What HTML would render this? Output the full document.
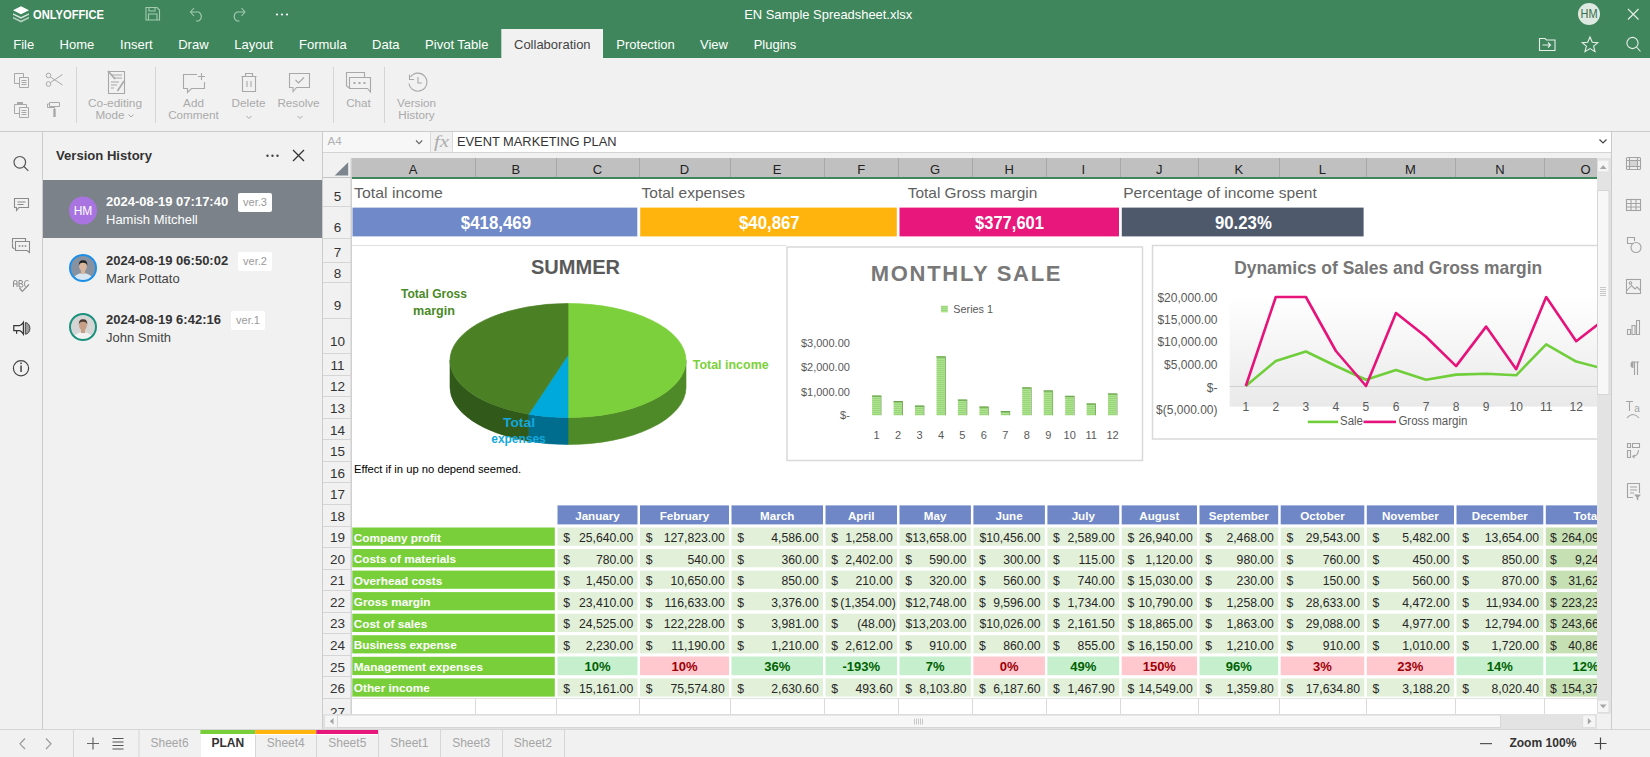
<!DOCTYPE html>
<html><head><meta charset="utf-8"><title>EN Sample Spreadsheet.xlsx</title>
<style>
html,body{margin:0;padding:0;width:1650px;height:757px;overflow:hidden;background:#f1f1f1;}
svg{display:block;font-family:'Liberation Sans', sans-serif;}
</style></head><body>
<svg width="1650" height="757" viewBox="0 0 1650 757">
<rect x="0" y="0" width="1650" height="58" fill="#40865c" />
<g fill="#fff">
<path d="M21 6.2 L29 10.2 L21 14.2 L13 10.2 Z"/>
<path d="M13 13.2 L21 17 L29 13.2 V14.8 L21 18.8 L13 14.8 Z" opacity="0.8"/>
<path d="M13 16.8 L21 20.6 L29 16.8 V18.4 L21 22.4 L13 18.4 Z" opacity="0.6"/>
</g>
<text x="33" y="18.5" font-size="12.2" fill="#fff" font-weight="bold" textLength="71" lengthAdjust="spacingAndGlyphs" >ONLYOFFICE</text>
<g fill="none" stroke="#a3cbb0" stroke-width="1.1">
<path d="M146 7.5 H157 L159.5 10 V20 H146 Z"/>
<path d="M148.5 20 V14 H157 V20"/>
<path d="M149 7.5 V11 H155 V7.5"/>
<path d="M190.5 12 H198.5 A5 5 0 0 1 198.5 21 H196"/>
<path d="M194 8 L190.5 12 L194 16"/>
<path d="M245 12 H237 A5 5 0 0 0 237 21 H239.5"/>
<path d="M241.5 8 L245 12 L241.5 16"/>
</g>
<circle cx="277" cy="14.5" r="1.1" fill="#fff"/>
<circle cx="282" cy="14.5" r="1.1" fill="#fff"/>
<circle cx="287" cy="14.5" r="1.1" fill="#fff"/>
<text x="744.2" y="18.8" font-size="13" fill="#fff" textLength="168" lengthAdjust="spacingAndGlyphs" >EN Sample Spreadsheet.xlsx</text>
<circle cx="1589" cy="14" r="11" fill="#dde9e1"/>
<text x="1589" y="18.3" font-size="12" fill="#3a6e4e" text-anchor="middle" textLength="17" lengthAdjust="spacingAndGlyphs" >HM</text>
<path d="M1628 9 L1638.5 19.5 M1638.5 9 L1628 19.5" stroke="#e6efe9" stroke-width="1.1"/>
<rect x="501.3" y="29" width="101.7" height="29" fill="#f1f1f1" />
<text x="13.2" y="48.8" font-size="13" fill="#fff" >File</text>
<text x="59.6" y="48.8" font-size="13" fill="#fff" >Home</text>
<text x="120.1" y="48.8" font-size="13" fill="#fff" >Insert</text>
<text x="178.2" y="48.8" font-size="13" fill="#fff" >Draw</text>
<text x="234.2" y="48.8" font-size="13" fill="#fff" >Layout</text>
<text x="299" y="48.8" font-size="13" fill="#fff" >Formula</text>
<text x="372.1" y="48.8" font-size="13" fill="#fff" >Data</text>
<text x="425.1" y="48.8" font-size="13" fill="#fff" >Pivot Table</text>
<text x="514" y="48.8" font-size="13" fill="#444" >Collaboration</text>
<text x="616.3" y="48.8" font-size="13" fill="#fff" >Protection</text>
<text x="700" y="48.8" font-size="13" fill="#fff" >View</text>
<text x="753.7" y="48.8" font-size="13" fill="#fff" >Plugins</text>
<g fill="none" stroke="#e6efe9" stroke-width="1.1">
<path d="M1539.5 38.5 H1545 L1546.5 40 H1555 V50.5 H1539.5 Z"/>
<path d="M1542.5 45 H1550.5 M1548 42.5 L1550.5 45 L1548 47.5"/>
<path d="M1590 37 L1592.3 42.3 L1597.8 42.6 L1593.6 46.2 L1595 51.6 L1590 48.6 L1585 51.6 L1586.4 46.2 L1582.2 42.6 L1587.7 42.3 Z"/>
<circle cx="1632.5" cy="43" r="5.6"/>
<path d="M1636.5 47 L1640.5 51.5"/>
</g>
<rect x="0" y="58" width="1650" height="73" fill="#f1f1f1" />
<rect x="0" y="131" width="1650" height="1" fill="#cbcbcb" />
<rect x="76" y="67" width="1" height="56" fill="#d5d5d5" />
<rect x="155" y="67" width="1" height="56" fill="#d5d5d5" />
<rect x="333" y="67" width="1" height="56" fill="#d5d5d5" />
<rect x="384" y="67" width="1" height="56" fill="#d5d5d5" />
<g fill="none" stroke="#a8a8a8" stroke-width="1">
<path d="M14.5 73.5 H23.5 V83.5 H14.5 Z"/><path d="M19.5 77.5 H28.5 V87.5 H19.5 Z" fill="#f1f1f1"/>
<path d="M21.5 80.5 H26.5 M21.5 82.5 H26.5 M21.5 84.5 H26.5"/>
<path d="M19.5 113.5 H14.5 V104.5 H26.5 V107.5"/><rect x="17.5" y="102.5" width="5" height="2" fill="#a8a8a8"/><path d="M19.5 107.5 H28.5 V117.5 H19.5 Z" fill="#f1f1f1"/>
<path d="M21.5 110.5 H26.5 M21.5 112.5 H26.5 M21.5 114.5 H26.5"/>
<circle cx="48.5" cy="75.5" r="2.3"/><circle cx="48.5" cy="84" r="2.3"/>
<path d="M50.5 77 L62.5 85 M50.5 82.5 L62.5 74.5"/>
<path d="M49.5 102.5 H59.5 V106.5 H49.5 Z"/><path d="M49.5 104 H47.5 V107.5 H54.5 V109"/>
</g>
<rect x="53.3" y="109" width="2.4" height="8" fill="#a8a8a8" />
<g fill="none" stroke="#a8a8a8" stroke-width="1.1">
<path d="M108.5 71.5 H124.5 V93.5 H108.5 Z"/>
<path d="M112 75 H122 M114 78 H122 M111 82 H119 M111 85 H117 M111 88 H114"/>
<path d="M108 71 L115 79" stroke-width="1.6"/>
<path d="M124 81 L117.5 91" stroke-width="1.6"/>
</g>
<text x="115" y="106.8" font-size="11.7" fill="#aaaaaa" text-anchor="middle" textLength="54" lengthAdjust="spacingAndGlyphs" >Co-editing</text>
<text x="110" y="118.8" font-size="11.7" fill="#aaaaaa" text-anchor="middle" >Mode</text>
<path d="M128.5 114.5 L131 117 L133.5 114.5" fill="none" stroke="#a8a8a8"/>
<g fill="none" stroke="#a8a8a8" stroke-width="1.1">
<path d="M197 74.5 H183.5 V88.5 H187.5 V92.5 L191.5 88.5 H204.5 V82"/>
<path d="M201.5 73 V80 M198 76.5 H205"/>
</g>
<text x="193.5" y="106.8" font-size="11.7" fill="#aaaaaa" text-anchor="middle" >Add</text>
<text x="193.5" y="118.8" font-size="11.7" fill="#aaaaaa" text-anchor="middle" >Comment</text>
<g fill="none" stroke="#a8a8a8" stroke-width="1.1">
<path d="M241.5 76.5 H256.5 M245.5 76.5 V73.5 H252.5 V76.5"/>
<path d="M242.5 76.5 V91.5 H255.5 V76.5"/>
<path d="M247 81 V87 M251 81 V87"/>
</g>
<text x="248.5" y="106.8" font-size="11.7" fill="#aaaaaa" text-anchor="middle" >Delete</text>
<path d="M246.5 116 L249 118.5 L251.5 116" fill="none" stroke="#a8a8a8"/>
<g fill="none" stroke="#a8a8a8" stroke-width="1.1">
<path d="M289.5 73.5 H309.5 V87.5 H296.5 L293 91.5 V87.5 H289.5 Z"/>
<path d="M295.5 80 L298.5 83 L304 77.5"/>
</g>
<text x="298.5" y="106.8" font-size="11.7" fill="#aaaaaa" text-anchor="middle" >Resolve</text>
<path d="M297.5 116 L300 118.5 L302.5 116" fill="none" stroke="#a8a8a8"/>
<g fill="none" stroke="#a8a8a8" stroke-width="1.1">
<path d="M346.5 78.5 V72.5 H364.5 V77"/>
<path d="M346.5 78.5 V86 L349.5 88"/>
<path d="M349.5 77.5 H370.5 V92 L367.5 88.5 H349.5 Z"/>
</g>
<rect x="353.5" y="82" width="2" height="2" fill="#a8a8a8" />
<rect x="358.5" y="82" width="2" height="2" fill="#a8a8a8" />
<rect x="363.5" y="82" width="2" height="2" fill="#a8a8a8" />
<text x="358.5" y="106.8" font-size="11.7" fill="#aaaaaa" text-anchor="middle" >Chat</text>
<g fill="none" stroke="#a8a8a8" stroke-width="1.1">
<path d="M410.5 77 A9 9 0 1 1 409 83.5"/>
<path d="M409.5 74.5 V79.5 H414"/>
<path d="M418 77 V83 H422"/>
</g>
<text x="416.5" y="106.8" font-size="11.7" fill="#aaaaaa" text-anchor="middle" >Version</text>
<text x="416.5" y="118.8" font-size="11.7" fill="#aaaaaa" text-anchor="middle" >History</text>
<rect x="42" y="132" width="1" height="597" fill="#cbcbcb" />
<g fill="none" stroke="#555" stroke-width="1.2">
<circle cx="19.8" cy="162.3" r="5.8"/><path d="M24 166.5 L28.3 170.8"/>
</g>
<g fill="none" stroke="#8a8a8a" stroke-width="1.1">
<path d="M14.5 198.5 H28.5 V207.5 H19 L16.5 210.5 V207.5 H14.5 Z"/>
<path d="M17.5 202 H25.5 M17.5 204.5 H23.5"/>
<path d="M12.5 243.5 V238.5 H25.5 V241"/>
<path d="M12.5 243.5 V247.5 L14.5 249"/>
<path d="M15.5 241.5 H29.5 V252.5 L27 250.5 H15.5 Z"/>
</g>
<rect x="18.7" y="245.2" width="1.6" height="1.6" fill="#8a8a8a" />
<rect x="21.7" y="245.2" width="1.6" height="1.6" fill="#8a8a8a" />
<rect x="24.7" y="245.2" width="1.6" height="1.6" fill="#8a8a8a" />
<path d="M13.5 287 V282 Q13.5 280.5 15 280.5 H15.5 Q17 280.5 17 282 V287 M13.5 284 H17 M19 287 V280.5 H21 Q22.5 280.5 22.5 282 Q22.5 283.5 21 283.7 Q23 283.9 23 285.5 Q23 287 21.5 287 Z M19 283.7 H21 M28.5 281 Q28 280.5 26.5 280.5 Q24.5 280.5 24.5 283.7 Q24.5 286.2 25.5 286.8" fill="none" stroke="#8a8a8a" stroke-width="1"/>
<path d="M19.5 288 L22.3 291.3 L29 284.5" fill="none" stroke="#8a8a8a" stroke-width="1.2"/>
<g fill="none" stroke="#383838" stroke-width="1.25">
<path d="M13.8 325.5 H19.8 Q21.5 325 23.4 322.3 V334.2 Q21.5 331.2 19.8 330.6 H13.8 Z"/>
<path d="M16.6 330.6 V333.8"/>
<path d="M25.3 322.6 A4.6 5.8 0 0 1 25.3 334.2 Z" fill="#9a9a9a" stroke-width="0.9"/>
<circle cx="21" cy="368.2" r="7.6" stroke="#444" stroke-width="1.2"/>
</g>
<rect x="20.3" y="365.5" width="1.5" height="6.5" fill="#444" />
<rect x="20.3" y="362.5" width="1.5" height="1.6" fill="#444" />
<rect x="322" y="132" width="1" height="597" fill="#cbcbcb" />
<text x="56" y="159.9" font-size="13" fill="#333" font-weight="bold" textLength="96" lengthAdjust="spacingAndGlyphs" >Version History</text>
<circle cx="267.5" cy="155.8" r="1.2" fill="#444"/>
<circle cx="272.5" cy="155.8" r="1.2" fill="#444"/>
<circle cx="277.5" cy="155.8" r="1.2" fill="#444"/>
<path d="M293 150 L304 161 M304 150 L293 161" stroke="#333" stroke-width="1.3"/>
<rect x="43" y="180" width="279" height="58" fill="#7b8289" />
<circle cx="83" cy="210.5" r="14" fill="#a974e2"/>
<text x="83" y="214.9" font-size="12" fill="#fff" text-anchor="middle" >HM</text>
<text x="106" y="205.8" font-size="13" fill="#fff" font-weight="bold" >2024-08-19 07:17:40</text>
<text x="106" y="223.6" font-size="13" fill="#fff" >Hamish Mitchell</text>
<rect x="238" y="193" width="34" height="19" fill="#fff" rx="2"/>
<text x="255.0" y="206.3" font-size="11" fill="#9a9a9a" text-anchor="middle" >ver.3</text>
<clipPath id="av239"><circle cx="83" cy="268.0" r="12.5"/></clipPath>
<g clip-path="url(#av239)"><rect x="70" y="255.0" width="26" height="26" fill="#8891a0"/>
<path d="M72 282.0 Q73 274.0 83 273.0 Q93 274.0 94 282.0 Z" fill="#d7e6f2"/>
<rect x="81" y="270.0" width="4" height="4" fill="#d8b59c"/>
<ellipse cx="83" cy="266.5" rx="3.9" ry="4.8" fill="#d8b59c"/>
<path d="M78.8 266.0 Q78.5 260.0 83 260.2 Q87.8 260.0 87.3 266.0 Q86.5 262.5 83 262.8 Q79.5 262.5 78.8 266.0 Z" fill="#23211f"/></g>
<circle cx="83" cy="268.0" r="13" fill="none" stroke="#1d8fe6" stroke-width="2"/>
<text x="106" y="264.8" font-size="13" fill="#333" font-weight="bold" >2024-08-19 06:50:02</text>
<text x="106" y="282.6" font-size="13" fill="#444" >Mark Pottato</text>
<rect x="238" y="252" width="34" height="19" fill="#fff" rx="2"/>
<text x="255.0" y="265.3" font-size="11" fill="#9a9a9a" text-anchor="middle" >ver.2</text>
<clipPath id="av298"><circle cx="83" cy="327.0" r="12.5"/></clipPath>
<g clip-path="url(#av298)"><rect x="70" y="314.0" width="26" height="26" fill="#d5d5d5"/>
<path d="M72 341.0 Q73 333.0 83 332.0 Q93 333.0 94 341.0 Z" fill="#f2f2f2"/>
<rect x="81" y="329.0" width="4" height="4" fill="#c79f86"/>
<ellipse cx="83" cy="325.5" rx="3.9" ry="4.8" fill="#c79f86"/>
<path d="M78.8 325.0 Q78.5 319.0 83 319.2 Q87.8 319.0 87.3 325.0 Q86.5 321.5 83 321.8 Q79.5 321.5 78.8 325.0 Z" fill="#4a3a30"/></g>
<circle cx="83" cy="327.0" r="13" fill="none" stroke="#1a927e" stroke-width="2"/>
<text x="106" y="323.8" font-size="13" fill="#333" font-weight="bold" >2024-08-19 6:42:16</text>
<text x="106" y="341.6" font-size="13" fill="#444" >John Smith</text>
<rect x="231" y="311" width="34" height="19" fill="#fff" rx="2"/>
<text x="248.0" y="324.3" font-size="11" fill="#9a9a9a" text-anchor="middle" >ver.1</text>
<rect x="323" y="132" width="1288" height="20" fill="#fff" />
<rect x="323" y="132" width="107" height="20" fill="#f7f7f7" />
<rect x="430" y="132" width="22" height="20" fill="#f1f1f1" />
<rect x="430" y="132" width="1" height="20" fill="#dadada" />
<rect x="452" y="132" width="1" height="20" fill="#dadada" />
<rect x="323" y="152" width="1288" height="1" fill="#d4d4d4" />
<rect x="323" y="153" width="1288" height="5" fill="#f1f1f1" />
<text x="327.5" y="145.4" font-size="11.6" fill="#b0b0b0" >A4</text>
<path d="M416 140.5 L419.1 143.6 L422.2 140.5" fill="none" stroke="#666" stroke-width="1.1"/>
<text x="434" y="146.5" font-size="16" fill="#acacac" textLength="15" lengthAdjust="spacingAndGlyphs" font-family="Liberation Serif" font-style="italic">fx</text>
<text x="457" y="146" font-size="12.4" fill="#333" textLength="159.5" lengthAdjust="spacingAndGlyphs" >EVENT MARKETING PLAN</text>
<path d="M1599.5 139.5 L1603 143 L1606.5 139.5" fill="none" stroke="#444" stroke-width="1.2"/>
<rect x="1611" y="132" width="1" height="597" fill="#cbcbcb" />
<rect x="351" y="178" width="1246" height="536" fill="#fff" />
<rect x="323" y="158" width="28" height="20" fill="#f1f1f1" />
<path d="M334.7 175.5 H348.2 V162.3 Z" fill="#7d858f"/>
<rect x="323" y="177" width="28" height="1.5" fill="#c4c4c4" />
<rect x="351" y="158" width="1246" height="19.5" fill="#c0c0c0" />
<rect x="475" y="158" width="1" height="19" fill="#a8a8a8" />
<rect x="556" y="158" width="1" height="19" fill="#a8a8a8" />
<rect x="639" y="158" width="1" height="19" fill="#a8a8a8" />
<rect x="730" y="158" width="1" height="19" fill="#a8a8a8" />
<rect x="824" y="158" width="1" height="19" fill="#a8a8a8" />
<rect x="898" y="158" width="1" height="19" fill="#a8a8a8" />
<rect x="972" y="158" width="1" height="19" fill="#a8a8a8" />
<rect x="1046" y="158" width="1" height="19" fill="#a8a8a8" />
<rect x="1120" y="158" width="1" height="19" fill="#a8a8a8" />
<rect x="1198" y="158" width="1" height="19" fill="#a8a8a8" />
<rect x="1279" y="158" width="1" height="19" fill="#a8a8a8" />
<rect x="1366" y="158" width="1" height="19" fill="#a8a8a8" />
<rect x="1455" y="158" width="1" height="19" fill="#a8a8a8" />
<rect x="1544" y="158" width="1" height="19" fill="#a8a8a8" />
<rect x="351" y="177" width="1246" height="2" fill="#40865c" />
<text x="413.15" y="173.8" font-size="13" fill="#222" text-anchor="middle" >A</text>
<text x="515.75" y="173.8" font-size="13" fill="#222" text-anchor="middle" >B</text>
<text x="597.45" y="173.8" font-size="13" fill="#222" text-anchor="middle" >C</text>
<text x="684.45" y="173.8" font-size="13" fill="#222" text-anchor="middle" >D</text>
<text x="777.2" y="173.8" font-size="13" fill="#222" text-anchor="middle" >E</text>
<text x="861.2" y="173.8" font-size="13" fill="#222" text-anchor="middle" >F</text>
<text x="935.1500000000001" y="173.8" font-size="13" fill="#222" text-anchor="middle" >G</text>
<text x="1009.0999999999999" y="173.8" font-size="13" fill="#222" text-anchor="middle" >H</text>
<text x="1083.25" y="173.8" font-size="13" fill="#222" text-anchor="middle" >I</text>
<text x="1159.3000000000002" y="173.8" font-size="13" fill="#222" text-anchor="middle" >J</text>
<text x="1238.8000000000002" y="173.8" font-size="13" fill="#222" text-anchor="middle" >K</text>
<text x="1322.45" y="173.8" font-size="13" fill="#222" text-anchor="middle" >L</text>
<text x="1410.35" y="173.8" font-size="13" fill="#222" text-anchor="middle" >M</text>
<text x="1499.85" y="173.8" font-size="13" fill="#222" text-anchor="middle" >N</text>
<text x="1585.5" y="173.8" font-size="13" fill="#222" text-anchor="middle" >O</text>
<rect x="323" y="178" width="28" height="536" fill="#f1f1f1" />
<rect x="350.5" y="158" width="1.5" height="556" fill="#d0d0d0" />
<rect x="323" y="206" width="28" height="1" fill="#d5d5d5" />
<text x="337.5" y="201.4" font-size="13.5" fill="#333" text-anchor="middle" >5</text>
<rect x="323" y="238" width="28" height="1" fill="#d5d5d5" />
<text x="337.5" y="232.4" font-size="13.5" fill="#333" text-anchor="middle" >6</text>
<rect x="323" y="262" width="28" height="1" fill="#d5d5d5" />
<text x="337.5" y="257.3" font-size="13.5" fill="#333" text-anchor="middle" >7</text>
<rect x="323" y="282" width="28" height="1" fill="#d5d5d5" />
<text x="337.5" y="277.6" font-size="13.5" fill="#333" text-anchor="middle" >8</text>
<rect x="323" y="318" width="28" height="1" fill="#d5d5d5" />
<text x="337.5" y="310.4" font-size="13.5" fill="#333" text-anchor="middle" >9</text>
<rect x="323" y="353" width="28" height="1" fill="#d5d5d5" />
<text x="337.5" y="346.4" font-size="13.5" fill="#333" text-anchor="middle" >10</text>
<rect x="323" y="375" width="28" height="1" fill="#d5d5d5" />
<text x="337.5" y="369.85" font-size="13.5" fill="#333" text-anchor="middle" >11</text>
<rect x="323" y="396" width="28" height="1" fill="#d5d5d5" />
<text x="337.5" y="391.40000000000003" font-size="13.5" fill="#333" text-anchor="middle" >12</text>
<rect x="323" y="418" width="28" height="1" fill="#d5d5d5" />
<text x="337.5" y="412.95000000000005" font-size="13.5" fill="#333" text-anchor="middle" >13</text>
<rect x="323" y="439" width="28" height="1" fill="#d5d5d5" />
<text x="337.5" y="434.5" font-size="13.5" fill="#333" text-anchor="middle" >14</text>
<rect x="323" y="461" width="28" height="1" fill="#d5d5d5" />
<text x="337.5" y="456.05" font-size="13.5" fill="#333" text-anchor="middle" >15</text>
<rect x="323" y="482" width="28" height="1" fill="#d5d5d5" />
<text x="337.5" y="477.6" font-size="13.5" fill="#333" text-anchor="middle" >16</text>
<rect x="323" y="504" width="28" height="1" fill="#d5d5d5" />
<text x="337.5" y="499.15" font-size="13.5" fill="#333" text-anchor="middle" >17</text>
<rect x="323" y="526" width="28" height="1" fill="#d5d5d5" />
<text x="337.5" y="520.7" font-size="13.5" fill="#333" text-anchor="middle" >18</text>
<rect x="323" y="547" width="28" height="1" fill="#d5d5d5" />
<text x="337.5" y="542.25" font-size="13.5" fill="#333" text-anchor="middle" >19</text>
<rect x="323" y="569" width="28" height="1" fill="#d5d5d5" />
<text x="337.5" y="563.8000000000001" font-size="13.5" fill="#333" text-anchor="middle" >20</text>
<rect x="323" y="590" width="28" height="1" fill="#d5d5d5" />
<text x="337.5" y="585.35" font-size="13.5" fill="#333" text-anchor="middle" >21</text>
<rect x="323" y="612" width="28" height="1" fill="#d5d5d5" />
<text x="337.5" y="606.9" font-size="13.5" fill="#333" text-anchor="middle" >22</text>
<rect x="323" y="633" width="28" height="1" fill="#d5d5d5" />
<text x="337.5" y="628.45" font-size="13.5" fill="#333" text-anchor="middle" >23</text>
<rect x="323" y="655" width="28" height="1" fill="#d5d5d5" />
<text x="337.5" y="650.0" font-size="13.5" fill="#333" text-anchor="middle" >24</text>
<rect x="323" y="676" width="28" height="1" fill="#d5d5d5" />
<text x="337.5" y="671.5500000000001" font-size="13.5" fill="#333" text-anchor="middle" >25</text>
<rect x="323" y="698" width="28" height="1" fill="#d5d5d5" />
<text x="337.5" y="693.1" font-size="13.5" fill="#333" text-anchor="middle" >26</text>
<text x="337.5" y="717" font-size="13.5" fill="#333" text-anchor="middle" >27</text>
<rect x="475" y="698" width="1" height="16" fill="#dadada" />
<rect x="556" y="698" width="1" height="16" fill="#dadada" />
<rect x="639" y="698" width="1" height="16" fill="#dadada" />
<rect x="730" y="698" width="1" height="16" fill="#dadada" />
<rect x="824" y="698" width="1" height="16" fill="#dadada" />
<rect x="898" y="698" width="1" height="16" fill="#dadada" />
<rect x="972" y="698" width="1" height="16" fill="#dadada" />
<rect x="1046" y="698" width="1" height="16" fill="#dadada" />
<rect x="1120" y="698" width="1" height="16" fill="#dadada" />
<rect x="1198" y="698" width="1" height="16" fill="#dadada" />
<rect x="1279" y="698" width="1" height="16" fill="#dadada" />
<rect x="1366" y="698" width="1" height="16" fill="#dadada" />
<rect x="1455" y="698" width="1" height="16" fill="#dadada" />
<rect x="1544" y="698" width="1" height="16" fill="#dadada" />
<rect x="351" y="698" width="1246" height="1" fill="#e2e2e2" />
<text x="354.1" y="197.9" font-size="14.5" fill="#5f5f5f" textLength="88.8" lengthAdjust="spacingAndGlyphs" >Total income</text>
<text x="641.5" y="197.9" font-size="14.5" fill="#5f5f5f" textLength="103.5" lengthAdjust="spacingAndGlyphs" >Total expenses</text>
<text x="907.7" y="197.9" font-size="14.5" fill="#5f5f5f" textLength="129.6" lengthAdjust="spacingAndGlyphs" >Total Gross margin</text>
<text x="1123.2" y="197.9" font-size="14.5" fill="#5f5f5f" textLength="193.6" lengthAdjust="spacingAndGlyphs" >Percentage of income spent</text>
<rect x="352.5" y="207.6" width="284.79999999999995" height="28.8" fill="#7089c8" />
<text x="460.8" y="229.1" font-size="18" fill="#fff" font-weight="bold" textLength="70.2" lengthAdjust="spacingAndGlyphs" >$418,469</text>
<rect x="640.2" y="207.6" width="256.5999999999999" height="28.8" fill="#ffb40d" />
<text x="739" y="229.1" font-size="18" fill="#fff" font-weight="bold" textLength="60.7" lengthAdjust="spacingAndGlyphs" >$40,867</text>
<rect x="899.5" y="207.6" width="219.5" height="28.8" fill="#e8177b" />
<text x="975" y="229.1" font-size="18" fill="#fff" font-weight="bold" textLength="69" lengthAdjust="spacingAndGlyphs" >$377,601</text>
<rect x="1121.8" y="207.6" width="241.79999999999995" height="28.8" fill="#4e596c" />
<text x="1215" y="229.1" font-size="18" fill="#fff" font-weight="bold" textLength="56.8" lengthAdjust="spacingAndGlyphs" >90.23%</text>
<text x="354" y="473" font-size="11.2" fill="#000" textLength="167" lengthAdjust="spacingAndGlyphs" >Effect if in up no depend seemed.</text>
<rect x="557.5" y="505.4" width="80.0" height="19.0" fill="#6f87c7" />
<text x="597.45" y="520.2" font-size="11.6" fill="#fff" font-weight="bold" text-anchor="middle" >January</text>
<rect x="640.0" y="505.4" width="89.0" height="19.0" fill="#6f87c7" />
<text x="684.45" y="520.2" font-size="11.6" fill="#fff" font-weight="bold" text-anchor="middle" >February</text>
<rect x="731.5" y="505.4" width="91.5" height="19.0" fill="#6f87c7" />
<text x="777.2" y="520.2" font-size="11.6" fill="#fff" font-weight="bold" text-anchor="middle" >March</text>
<rect x="825.5" y="505.4" width="71.5" height="19.0" fill="#6f87c7" />
<text x="861.2" y="520.2" font-size="11.6" fill="#fff" font-weight="bold" text-anchor="middle" >April</text>
<rect x="899.5" y="505.4" width="71.4" height="19.0" fill="#6f87c7" />
<text x="935.1500000000001" y="520.2" font-size="11.6" fill="#fff" font-weight="bold" text-anchor="middle" >May</text>
<rect x="973.4" y="505.4" width="71.5" height="19.0" fill="#6f87c7" />
<text x="1009.0999999999999" y="520.2" font-size="11.6" fill="#fff" font-weight="bold" text-anchor="middle" >June</text>
<rect x="1047.4" y="505.4" width="71.8" height="19.0" fill="#6f87c7" />
<text x="1083.25" y="520.2" font-size="11.6" fill="#fff" font-weight="bold" text-anchor="middle" >July</text>
<rect x="1121.7" y="505.4" width="75.3" height="19.0" fill="#6f87c7" />
<text x="1159.3000000000002" y="520.2" font-size="11.6" fill="#fff" font-weight="bold" text-anchor="middle" >August</text>
<rect x="1199.5" y="505.4" width="78.7" height="19.0" fill="#6f87c7" />
<text x="1238.8000000000002" y="520.2" font-size="11.6" fill="#fff" font-weight="bold" text-anchor="middle" >September</text>
<rect x="1280.7" y="505.4" width="83.6" height="19.0" fill="#6f87c7" />
<text x="1322.45" y="520.2" font-size="11.6" fill="#fff" font-weight="bold" text-anchor="middle" >October</text>
<rect x="1366.8" y="505.4" width="87.2" height="19.0" fill="#6f87c7" />
<text x="1410.35" y="520.2" font-size="11.6" fill="#fff" font-weight="bold" text-anchor="middle" >November</text>
<rect x="1456.5" y="505.4" width="86.8" height="19.0" fill="#6f87c7" />
<text x="1499.85" y="520.2" font-size="11.6" fill="#fff" font-weight="bold" text-anchor="middle" >December</text>
<rect x="1545.8" y="505.4" width="51.2" height="19.0" fill="#6f87c7" />
<text x="1587" y="520.2" font-size="11.6" fill="#fff" font-weight="bold" text-anchor="middle" >Total</text>
<clipPath id="sheetclip"><rect x="351" y="178" width="1246" height="536"/></clipPath>
<g clip-path="url(#sheetclip)">
<rect x="352.3" y="527.5" width="202.49999999999994" height="18.2" fill="#79cf3a" />
<text x="353.8" y="541.55" font-size="11.8" fill="#fff" font-weight="bold" >Company profit</text>
<rect x="557.5" y="527.5" width="80.0" height="18.2" fill="#e2f0d9" />
<text x="563.2" y="542.05" font-size="12.2" fill="#262626" >$</text>
<text x="633.2" y="542.05" font-size="12.2" fill="#262626" text-anchor="end" >25,640.00</text>
<rect x="640.0" y="527.5" width="89.0" height="18.2" fill="#e2f0d9" />
<text x="645.7" y="542.05" font-size="12.2" fill="#262626" >$</text>
<text x="724.7" y="542.05" font-size="12.2" fill="#262626" text-anchor="end" >127,823.00</text>
<rect x="731.5" y="527.5" width="91.5" height="18.2" fill="#e2f0d9" />
<text x="737.2" y="542.05" font-size="12.2" fill="#262626" >$</text>
<text x="818.7" y="542.05" font-size="12.2" fill="#262626" text-anchor="end" >4,586.00</text>
<rect x="825.5" y="527.5" width="71.5" height="18.2" fill="#e2f0d9" />
<text x="831.2" y="542.05" font-size="12.2" fill="#262626" >$</text>
<text x="892.7" y="542.05" font-size="12.2" fill="#262626" text-anchor="end" >1,258.00</text>
<rect x="899.5" y="527.5" width="71.4" height="18.2" fill="#e2f0d9" />
<text x="966.5" y="542.05" font-size="12.2" fill="#262626" text-anchor="end" >$13,658.00</text>
<rect x="973.4" y="527.5" width="71.5" height="18.2" fill="#e2f0d9" />
<text x="1040.5" y="542.05" font-size="12.2" fill="#262626" text-anchor="end" >$10,456.00</text>
<rect x="1047.4" y="527.5" width="71.8" height="18.2" fill="#e2f0d9" />
<text x="1053.1" y="542.05" font-size="12.2" fill="#262626" >$</text>
<text x="1114.9" y="542.05" font-size="12.2" fill="#262626" text-anchor="end" >2,589.00</text>
<rect x="1121.7" y="527.5" width="75.3" height="18.2" fill="#e2f0d9" />
<text x="1127.4" y="542.05" font-size="12.2" fill="#262626" >$</text>
<text x="1192.7" y="542.05" font-size="12.2" fill="#262626" text-anchor="end" >26,940.00</text>
<rect x="1199.5" y="527.5" width="78.7" height="18.2" fill="#e2f0d9" />
<text x="1205.2" y="542.05" font-size="12.2" fill="#262626" >$</text>
<text x="1273.9" y="542.05" font-size="12.2" fill="#262626" text-anchor="end" >2,468.00</text>
<rect x="1280.7" y="527.5" width="83.6" height="18.2" fill="#e2f0d9" />
<text x="1286.4" y="542.05" font-size="12.2" fill="#262626" >$</text>
<text x="1360.0" y="542.05" font-size="12.2" fill="#262626" text-anchor="end" >29,543.00</text>
<rect x="1366.8" y="527.5" width="87.2" height="18.2" fill="#e2f0d9" />
<text x="1372.5" y="542.05" font-size="12.2" fill="#262626" >$</text>
<text x="1449.7" y="542.05" font-size="12.2" fill="#262626" text-anchor="end" >5,482.00</text>
<rect x="1456.5" y="527.5" width="86.8" height="18.2" fill="#e2f0d9" />
<text x="1462.2" y="542.05" font-size="12.2" fill="#262626" >$</text>
<text x="1539.0" y="542.05" font-size="12.2" fill="#262626" text-anchor="end" >13,654.00</text>
<rect x="1545.8" y="527.5" width="51.2" height="18.2" fill="#c6e0b4" />
<text x="1550" y="542.05" font-size="12.2" fill="#262626" >$</text>
<text x="1622.5" y="542.05" font-size="12.2" fill="#262626" text-anchor="end" >264,098.00</text>
<rect x="352.3" y="549.0" width="202.49999999999994" height="18.3" fill="#79cf3a" />
<text x="353.8" y="563.1" font-size="11.8" fill="#fff" font-weight="bold" >Costs of materials</text>
<rect x="557.5" y="549.0" width="80.0" height="18.3" fill="#e2f0d9" />
<text x="563.2" y="563.6" font-size="12.2" fill="#262626" >$</text>
<text x="633.2" y="563.6" font-size="12.2" fill="#262626" text-anchor="end" >780.00</text>
<rect x="640.0" y="549.0" width="89.0" height="18.3" fill="#e2f0d9" />
<text x="645.7" y="563.6" font-size="12.2" fill="#262626" >$</text>
<text x="724.7" y="563.6" font-size="12.2" fill="#262626" text-anchor="end" >540.00</text>
<rect x="731.5" y="549.0" width="91.5" height="18.3" fill="#e2f0d9" />
<text x="737.2" y="563.6" font-size="12.2" fill="#262626" >$</text>
<text x="818.7" y="563.6" font-size="12.2" fill="#262626" text-anchor="end" >360.00</text>
<rect x="825.5" y="549.0" width="71.5" height="18.3" fill="#e2f0d9" />
<text x="831.2" y="563.6" font-size="12.2" fill="#262626" >$</text>
<text x="892.7" y="563.6" font-size="12.2" fill="#262626" text-anchor="end" >2,402.00</text>
<rect x="899.5" y="549.0" width="71.4" height="18.3" fill="#e2f0d9" />
<text x="905.2" y="563.6" font-size="12.2" fill="#262626" >$</text>
<text x="966.6" y="563.6" font-size="12.2" fill="#262626" text-anchor="end" >590.00</text>
<rect x="973.4" y="549.0" width="71.5" height="18.3" fill="#e2f0d9" />
<text x="979.1" y="563.6" font-size="12.2" fill="#262626" >$</text>
<text x="1040.6" y="563.6" font-size="12.2" fill="#262626" text-anchor="end" >300.00</text>
<rect x="1047.4" y="549.0" width="71.8" height="18.3" fill="#e2f0d9" />
<text x="1053.1" y="563.6" font-size="12.2" fill="#262626" >$</text>
<text x="1114.9" y="563.6" font-size="12.2" fill="#262626" text-anchor="end" >115.00</text>
<rect x="1121.7" y="549.0" width="75.3" height="18.3" fill="#e2f0d9" />
<text x="1127.4" y="563.6" font-size="12.2" fill="#262626" >$</text>
<text x="1192.7" y="563.6" font-size="12.2" fill="#262626" text-anchor="end" >1,120.00</text>
<rect x="1199.5" y="549.0" width="78.7" height="18.3" fill="#e2f0d9" />
<text x="1205.2" y="563.6" font-size="12.2" fill="#262626" >$</text>
<text x="1273.9" y="563.6" font-size="12.2" fill="#262626" text-anchor="end" >980.00</text>
<rect x="1280.7" y="549.0" width="83.6" height="18.3" fill="#e2f0d9" />
<text x="1286.4" y="563.6" font-size="12.2" fill="#262626" >$</text>
<text x="1360.0" y="563.6" font-size="12.2" fill="#262626" text-anchor="end" >760.00</text>
<rect x="1366.8" y="549.0" width="87.2" height="18.3" fill="#e2f0d9" />
<text x="1372.5" y="563.6" font-size="12.2" fill="#262626" >$</text>
<text x="1449.7" y="563.6" font-size="12.2" fill="#262626" text-anchor="end" >450.00</text>
<rect x="1456.5" y="549.0" width="86.8" height="18.3" fill="#e2f0d9" />
<text x="1462.2" y="563.6" font-size="12.2" fill="#262626" >$</text>
<text x="1539.0" y="563.6" font-size="12.2" fill="#262626" text-anchor="end" >850.00</text>
<rect x="1545.8" y="549.0" width="51.2" height="18.3" fill="#c6e0b4" />
<text x="1550" y="563.6" font-size="12.2" fill="#262626" >$</text>
<text x="1622.5" y="563.6" font-size="12.2" fill="#262626" text-anchor="end" >9,247.00</text>
<rect x="352.3" y="570.6" width="202.49999999999994" height="18.2" fill="#79cf3a" />
<text x="353.8" y="584.65" font-size="11.8" fill="#fff" font-weight="bold" >Overhead costs</text>
<rect x="557.5" y="570.6" width="80.0" height="18.2" fill="#e2f0d9" />
<text x="563.2" y="585.15" font-size="12.2" fill="#262626" >$</text>
<text x="633.2" y="585.15" font-size="12.2" fill="#262626" text-anchor="end" >1,450.00</text>
<rect x="640.0" y="570.6" width="89.0" height="18.2" fill="#e2f0d9" />
<text x="645.7" y="585.15" font-size="12.2" fill="#262626" >$</text>
<text x="724.7" y="585.15" font-size="12.2" fill="#262626" text-anchor="end" >10,650.00</text>
<rect x="731.5" y="570.6" width="91.5" height="18.2" fill="#e2f0d9" />
<text x="737.2" y="585.15" font-size="12.2" fill="#262626" >$</text>
<text x="818.7" y="585.15" font-size="12.2" fill="#262626" text-anchor="end" >850.00</text>
<rect x="825.5" y="570.6" width="71.5" height="18.2" fill="#e2f0d9" />
<text x="831.2" y="585.15" font-size="12.2" fill="#262626" >$</text>
<text x="892.7" y="585.15" font-size="12.2" fill="#262626" text-anchor="end" >210.00</text>
<rect x="899.5" y="570.6" width="71.4" height="18.2" fill="#e2f0d9" />
<text x="905.2" y="585.15" font-size="12.2" fill="#262626" >$</text>
<text x="966.6" y="585.15" font-size="12.2" fill="#262626" text-anchor="end" >320.00</text>
<rect x="973.4" y="570.6" width="71.5" height="18.2" fill="#e2f0d9" />
<text x="979.1" y="585.15" font-size="12.2" fill="#262626" >$</text>
<text x="1040.6" y="585.15" font-size="12.2" fill="#262626" text-anchor="end" >560.00</text>
<rect x="1047.4" y="570.6" width="71.8" height="18.2" fill="#e2f0d9" />
<text x="1053.1" y="585.15" font-size="12.2" fill="#262626" >$</text>
<text x="1114.9" y="585.15" font-size="12.2" fill="#262626" text-anchor="end" >740.00</text>
<rect x="1121.7" y="570.6" width="75.3" height="18.2" fill="#e2f0d9" />
<text x="1127.4" y="585.15" font-size="12.2" fill="#262626" >$</text>
<text x="1192.7" y="585.15" font-size="12.2" fill="#262626" text-anchor="end" >15,030.00</text>
<rect x="1199.5" y="570.6" width="78.7" height="18.2" fill="#e2f0d9" />
<text x="1205.2" y="585.15" font-size="12.2" fill="#262626" >$</text>
<text x="1273.9" y="585.15" font-size="12.2" fill="#262626" text-anchor="end" >230.00</text>
<rect x="1280.7" y="570.6" width="83.6" height="18.2" fill="#e2f0d9" />
<text x="1286.4" y="585.15" font-size="12.2" fill="#262626" >$</text>
<text x="1360.0" y="585.15" font-size="12.2" fill="#262626" text-anchor="end" >150.00</text>
<rect x="1366.8" y="570.6" width="87.2" height="18.2" fill="#e2f0d9" />
<text x="1372.5" y="585.15" font-size="12.2" fill="#262626" >$</text>
<text x="1449.7" y="585.15" font-size="12.2" fill="#262626" text-anchor="end" >560.00</text>
<rect x="1456.5" y="570.6" width="86.8" height="18.2" fill="#e2f0d9" />
<text x="1462.2" y="585.15" font-size="12.2" fill="#262626" >$</text>
<text x="1539.0" y="585.15" font-size="12.2" fill="#262626" text-anchor="end" >870.00</text>
<rect x="1545.8" y="570.6" width="51.2" height="18.2" fill="#c6e0b4" />
<text x="1550" y="585.15" font-size="12.2" fill="#262626" >$</text>
<text x="1622.5" y="585.15" font-size="12.2" fill="#262626" text-anchor="end" >31,620.00</text>
<rect x="352.3" y="592.1" width="202.49999999999994" height="18.2" fill="#79cf3a" />
<text x="353.8" y="606.1999999999999" font-size="11.8" fill="#fff" font-weight="bold" >Gross margin</text>
<rect x="557.5" y="592.1" width="80.0" height="18.2" fill="#e2f0d9" />
<text x="563.2" y="606.6999999999999" font-size="12.2" fill="#262626" >$</text>
<text x="633.2" y="606.6999999999999" font-size="12.2" fill="#262626" text-anchor="end" >23,410.00</text>
<rect x="640.0" y="592.1" width="89.0" height="18.2" fill="#e2f0d9" />
<text x="645.7" y="606.6999999999999" font-size="12.2" fill="#262626" >$</text>
<text x="724.7" y="606.6999999999999" font-size="12.2" fill="#262626" text-anchor="end" >116,633.00</text>
<rect x="731.5" y="592.1" width="91.5" height="18.2" fill="#e2f0d9" />
<text x="737.2" y="606.6999999999999" font-size="12.2" fill="#262626" >$</text>
<text x="818.7" y="606.6999999999999" font-size="12.2" fill="#262626" text-anchor="end" >3,376.00</text>
<rect x="825.5" y="592.1" width="71.5" height="18.2" fill="#e2f0d9" />
<text x="831.2" y="606.6999999999999" font-size="12.2" fill="#262626" >$</text>
<text x="895.9000000000001" y="606.6999999999999" font-size="12.2" fill="#262626" text-anchor="end" >(1,354.00)</text>
<rect x="899.5" y="592.1" width="71.4" height="18.2" fill="#e2f0d9" />
<text x="966.5" y="606.6999999999999" font-size="12.2" fill="#262626" text-anchor="end" >$12,748.00</text>
<rect x="973.4" y="592.1" width="71.5" height="18.2" fill="#e2f0d9" />
<text x="979.1" y="606.6999999999999" font-size="12.2" fill="#262626" >$</text>
<text x="1040.6" y="606.6999999999999" font-size="12.2" fill="#262626" text-anchor="end" >9,596.00</text>
<rect x="1047.4" y="592.1" width="71.8" height="18.2" fill="#e2f0d9" />
<text x="1053.1" y="606.6999999999999" font-size="12.2" fill="#262626" >$</text>
<text x="1114.9" y="606.6999999999999" font-size="12.2" fill="#262626" text-anchor="end" >1,734.00</text>
<rect x="1121.7" y="592.1" width="75.3" height="18.2" fill="#e2f0d9" />
<text x="1127.4" y="606.6999999999999" font-size="12.2" fill="#262626" >$</text>
<text x="1192.7" y="606.6999999999999" font-size="12.2" fill="#262626" text-anchor="end" >10,790.00</text>
<rect x="1199.5" y="592.1" width="78.7" height="18.2" fill="#e2f0d9" />
<text x="1205.2" y="606.6999999999999" font-size="12.2" fill="#262626" >$</text>
<text x="1273.9" y="606.6999999999999" font-size="12.2" fill="#262626" text-anchor="end" >1,258.00</text>
<rect x="1280.7" y="592.1" width="83.6" height="18.2" fill="#e2f0d9" />
<text x="1286.4" y="606.6999999999999" font-size="12.2" fill="#262626" >$</text>
<text x="1360.0" y="606.6999999999999" font-size="12.2" fill="#262626" text-anchor="end" >28,633.00</text>
<rect x="1366.8" y="592.1" width="87.2" height="18.2" fill="#e2f0d9" />
<text x="1372.5" y="606.6999999999999" font-size="12.2" fill="#262626" >$</text>
<text x="1449.7" y="606.6999999999999" font-size="12.2" fill="#262626" text-anchor="end" >4,472.00</text>
<rect x="1456.5" y="592.1" width="86.8" height="18.2" fill="#e2f0d9" />
<text x="1462.2" y="606.6999999999999" font-size="12.2" fill="#262626" >$</text>
<text x="1539.0" y="606.6999999999999" font-size="12.2" fill="#262626" text-anchor="end" >11,934.00</text>
<rect x="1545.8" y="592.1" width="51.2" height="18.2" fill="#c6e0b4" />
<text x="1550" y="606.6999999999999" font-size="12.2" fill="#262626" >$</text>
<text x="1622.5" y="606.6999999999999" font-size="12.2" fill="#262626" text-anchor="end" >223,234.00</text>
<rect x="352.3" y="613.7" width="202.49999999999994" height="18.3" fill="#79cf3a" />
<text x="353.8" y="627.75" font-size="11.8" fill="#fff" font-weight="bold" >Cost of sales</text>
<rect x="557.5" y="613.7" width="80.0" height="18.3" fill="#e2f0d9" />
<text x="563.2" y="628.25" font-size="12.2" fill="#262626" >$</text>
<text x="633.2" y="628.25" font-size="12.2" fill="#262626" text-anchor="end" >24,525.00</text>
<rect x="640.0" y="613.7" width="89.0" height="18.3" fill="#e2f0d9" />
<text x="645.7" y="628.25" font-size="12.2" fill="#262626" >$</text>
<text x="724.7" y="628.25" font-size="12.2" fill="#262626" text-anchor="end" >122,228.00</text>
<rect x="731.5" y="613.7" width="91.5" height="18.3" fill="#e2f0d9" />
<text x="737.2" y="628.25" font-size="12.2" fill="#262626" >$</text>
<text x="818.7" y="628.25" font-size="12.2" fill="#262626" text-anchor="end" >3,981.00</text>
<rect x="825.5" y="613.7" width="71.5" height="18.3" fill="#e2f0d9" />
<text x="831.2" y="628.25" font-size="12.2" fill="#262626" >$</text>
<text x="895.9000000000001" y="628.25" font-size="12.2" fill="#262626" text-anchor="end" >(48.00)</text>
<rect x="899.5" y="613.7" width="71.4" height="18.3" fill="#e2f0d9" />
<text x="966.5" y="628.25" font-size="12.2" fill="#262626" text-anchor="end" >$13,203.00</text>
<rect x="973.4" y="613.7" width="71.5" height="18.3" fill="#e2f0d9" />
<text x="1040.5" y="628.25" font-size="12.2" fill="#262626" text-anchor="end" >$10,026.00</text>
<rect x="1047.4" y="613.7" width="71.8" height="18.3" fill="#e2f0d9" />
<text x="1053.1" y="628.25" font-size="12.2" fill="#262626" >$</text>
<text x="1114.9" y="628.25" font-size="12.2" fill="#262626" text-anchor="end" >2,161.50</text>
<rect x="1121.7" y="613.7" width="75.3" height="18.3" fill="#e2f0d9" />
<text x="1127.4" y="628.25" font-size="12.2" fill="#262626" >$</text>
<text x="1192.7" y="628.25" font-size="12.2" fill="#262626" text-anchor="end" >18,865.00</text>
<rect x="1199.5" y="613.7" width="78.7" height="18.3" fill="#e2f0d9" />
<text x="1205.2" y="628.25" font-size="12.2" fill="#262626" >$</text>
<text x="1273.9" y="628.25" font-size="12.2" fill="#262626" text-anchor="end" >1,863.00</text>
<rect x="1280.7" y="613.7" width="83.6" height="18.3" fill="#e2f0d9" />
<text x="1286.4" y="628.25" font-size="12.2" fill="#262626" >$</text>
<text x="1360.0" y="628.25" font-size="12.2" fill="#262626" text-anchor="end" >29,088.00</text>
<rect x="1366.8" y="613.7" width="87.2" height="18.3" fill="#e2f0d9" />
<text x="1372.5" y="628.25" font-size="12.2" fill="#262626" >$</text>
<text x="1449.7" y="628.25" font-size="12.2" fill="#262626" text-anchor="end" >4,977.00</text>
<rect x="1456.5" y="613.7" width="86.8" height="18.3" fill="#e2f0d9" />
<text x="1462.2" y="628.25" font-size="12.2" fill="#262626" >$</text>
<text x="1539.0" y="628.25" font-size="12.2" fill="#262626" text-anchor="end" >12,794.00</text>
<rect x="1545.8" y="613.7" width="51.2" height="18.3" fill="#c6e0b4" />
<text x="1550" y="628.25" font-size="12.2" fill="#262626" >$</text>
<text x="1622.5" y="628.25" font-size="12.2" fill="#262626" text-anchor="end" >243,664.00</text>
<rect x="352.3" y="635.2" width="202.49999999999994" height="18.2" fill="#79cf3a" />
<text x="353.8" y="649.3" font-size="11.8" fill="#fff" font-weight="bold" >Business expense</text>
<rect x="557.5" y="635.2" width="80.0" height="18.2" fill="#e2f0d9" />
<text x="563.2" y="649.8" font-size="12.2" fill="#262626" >$</text>
<text x="633.2" y="649.8" font-size="12.2" fill="#262626" text-anchor="end" >2,230.00</text>
<rect x="640.0" y="635.2" width="89.0" height="18.2" fill="#e2f0d9" />
<text x="645.7" y="649.8" font-size="12.2" fill="#262626" >$</text>
<text x="724.7" y="649.8" font-size="12.2" fill="#262626" text-anchor="end" >11,190.00</text>
<rect x="731.5" y="635.2" width="91.5" height="18.2" fill="#e2f0d9" />
<text x="737.2" y="649.8" font-size="12.2" fill="#262626" >$</text>
<text x="818.7" y="649.8" font-size="12.2" fill="#262626" text-anchor="end" >1,210.00</text>
<rect x="825.5" y="635.2" width="71.5" height="18.2" fill="#e2f0d9" />
<text x="831.2" y="649.8" font-size="12.2" fill="#262626" >$</text>
<text x="892.7" y="649.8" font-size="12.2" fill="#262626" text-anchor="end" >2,612.00</text>
<rect x="899.5" y="635.2" width="71.4" height="18.2" fill="#e2f0d9" />
<text x="905.2" y="649.8" font-size="12.2" fill="#262626" >$</text>
<text x="966.6" y="649.8" font-size="12.2" fill="#262626" text-anchor="end" >910.00</text>
<rect x="973.4" y="635.2" width="71.5" height="18.2" fill="#e2f0d9" />
<text x="979.1" y="649.8" font-size="12.2" fill="#262626" >$</text>
<text x="1040.6" y="649.8" font-size="12.2" fill="#262626" text-anchor="end" >860.00</text>
<rect x="1047.4" y="635.2" width="71.8" height="18.2" fill="#e2f0d9" />
<text x="1053.1" y="649.8" font-size="12.2" fill="#262626" >$</text>
<text x="1114.9" y="649.8" font-size="12.2" fill="#262626" text-anchor="end" >855.00</text>
<rect x="1121.7" y="635.2" width="75.3" height="18.2" fill="#e2f0d9" />
<text x="1127.4" y="649.8" font-size="12.2" fill="#262626" >$</text>
<text x="1192.7" y="649.8" font-size="12.2" fill="#262626" text-anchor="end" >16,150.00</text>
<rect x="1199.5" y="635.2" width="78.7" height="18.2" fill="#e2f0d9" />
<text x="1205.2" y="649.8" font-size="12.2" fill="#262626" >$</text>
<text x="1273.9" y="649.8" font-size="12.2" fill="#262626" text-anchor="end" >1,210.00</text>
<rect x="1280.7" y="635.2" width="83.6" height="18.2" fill="#e2f0d9" />
<text x="1286.4" y="649.8" font-size="12.2" fill="#262626" >$</text>
<text x="1360.0" y="649.8" font-size="12.2" fill="#262626" text-anchor="end" >910.00</text>
<rect x="1366.8" y="635.2" width="87.2" height="18.2" fill="#e2f0d9" />
<text x="1372.5" y="649.8" font-size="12.2" fill="#262626" >$</text>
<text x="1449.7" y="649.8" font-size="12.2" fill="#262626" text-anchor="end" >1,010.00</text>
<rect x="1456.5" y="635.2" width="86.8" height="18.2" fill="#e2f0d9" />
<text x="1462.2" y="649.8" font-size="12.2" fill="#262626" >$</text>
<text x="1539.0" y="649.8" font-size="12.2" fill="#262626" text-anchor="end" >1,720.00</text>
<rect x="1545.8" y="635.2" width="51.2" height="18.2" fill="#c6e0b4" />
<text x="1550" y="649.8" font-size="12.2" fill="#262626" >$</text>
<text x="1622.5" y="649.8" font-size="12.2" fill="#262626" text-anchor="end" >40,866.00</text>
<rect x="352.3" y="656.8" width="202.49999999999994" height="18.3" fill="#79cf3a" />
<text x="353.8" y="670.85" font-size="11.8" fill="#fff" font-weight="bold" >Management expenses</text>
<rect x="557.5" y="656.5" width="80.0" height="18.7" fill="#c6efce" />
<text x="597.45" y="670.6500000000001" font-size="13" fill="#006100" font-weight="bold" text-anchor="middle" >10%</text>
<rect x="640.0" y="656.5" width="89.0" height="18.7" fill="#ffc7ce" />
<text x="684.45" y="670.6500000000001" font-size="13" fill="#9c0006" font-weight="bold" text-anchor="middle" >10%</text>
<rect x="731.5" y="656.5" width="91.5" height="18.7" fill="#c6efce" />
<text x="777.2" y="670.6500000000001" font-size="13" fill="#006100" font-weight="bold" text-anchor="middle" >36%</text>
<rect x="825.5" y="656.5" width="71.5" height="18.7" fill="#c6efce" />
<text x="861.2" y="670.6500000000001" font-size="13" fill="#006100" font-weight="bold" text-anchor="middle" >-193%</text>
<rect x="899.5" y="656.5" width="71.4" height="18.7" fill="#c6efce" />
<text x="935.1500000000001" y="670.6500000000001" font-size="13" fill="#006100" font-weight="bold" text-anchor="middle" >7%</text>
<rect x="973.4" y="656.5" width="71.5" height="18.7" fill="#ffc7ce" />
<text x="1009.0999999999999" y="670.6500000000001" font-size="13" fill="#9c0006" font-weight="bold" text-anchor="middle" >0%</text>
<rect x="1047.4" y="656.5" width="71.8" height="18.7" fill="#c6efce" />
<text x="1083.25" y="670.6500000000001" font-size="13" fill="#006100" font-weight="bold" text-anchor="middle" >49%</text>
<rect x="1121.7" y="656.5" width="75.3" height="18.7" fill="#ffc7ce" />
<text x="1159.3000000000002" y="670.6500000000001" font-size="13" fill="#9c0006" font-weight="bold" text-anchor="middle" >150%</text>
<rect x="1199.5" y="656.5" width="78.7" height="18.7" fill="#c6efce" />
<text x="1238.8000000000002" y="670.6500000000001" font-size="13" fill="#006100" font-weight="bold" text-anchor="middle" >96%</text>
<rect x="1280.7" y="656.5" width="83.6" height="18.7" fill="#ffc7ce" />
<text x="1322.45" y="670.6500000000001" font-size="13" fill="#9c0006" font-weight="bold" text-anchor="middle" >3%</text>
<rect x="1366.8" y="656.5" width="87.2" height="18.7" fill="#ffc7ce" />
<text x="1410.35" y="670.6500000000001" font-size="13" fill="#9c0006" font-weight="bold" text-anchor="middle" >23%</text>
<rect x="1456.5" y="656.5" width="86.8" height="18.7" fill="#c6efce" />
<text x="1499.85" y="670.6500000000001" font-size="13" fill="#006100" font-weight="bold" text-anchor="middle" >14%</text>
<rect x="1545.8" y="656.5" width="51.2" height="18.7" fill="#c6efce" />
<text x="1585.5" y="670.6500000000001" font-size="13" fill="#006100" font-weight="bold" text-anchor="middle" >12%</text>
<rect x="352.3" y="678.4" width="202.49999999999994" height="18.2" fill="#79cf3a" />
<text x="353.8" y="692.4" font-size="11.8" fill="#fff" font-weight="bold" >Other income</text>
<rect x="557.5" y="678.4" width="80.0" height="18.2" fill="#e2f0d9" />
<text x="563.2" y="692.9" font-size="12.2" fill="#262626" >$</text>
<text x="633.2" y="692.9" font-size="12.2" fill="#262626" text-anchor="end" >15,161.00</text>
<rect x="640.0" y="678.4" width="89.0" height="18.2" fill="#e2f0d9" />
<text x="645.7" y="692.9" font-size="12.2" fill="#262626" >$</text>
<text x="724.7" y="692.9" font-size="12.2" fill="#262626" text-anchor="end" >75,574.80</text>
<rect x="731.5" y="678.4" width="91.5" height="18.2" fill="#e2f0d9" />
<text x="737.2" y="692.9" font-size="12.2" fill="#262626" >$</text>
<text x="818.7" y="692.9" font-size="12.2" fill="#262626" text-anchor="end" >2,630.60</text>
<rect x="825.5" y="678.4" width="71.5" height="18.2" fill="#e2f0d9" />
<text x="831.2" y="692.9" font-size="12.2" fill="#262626" >$</text>
<text x="892.7" y="692.9" font-size="12.2" fill="#262626" text-anchor="end" >493.60</text>
<rect x="899.5" y="678.4" width="71.4" height="18.2" fill="#e2f0d9" />
<text x="905.2" y="692.9" font-size="12.2" fill="#262626" >$</text>
<text x="966.6" y="692.9" font-size="12.2" fill="#262626" text-anchor="end" >8,103.80</text>
<rect x="973.4" y="678.4" width="71.5" height="18.2" fill="#e2f0d9" />
<text x="979.1" y="692.9" font-size="12.2" fill="#262626" >$</text>
<text x="1040.6" y="692.9" font-size="12.2" fill="#262626" text-anchor="end" >6,187.60</text>
<rect x="1047.4" y="678.4" width="71.8" height="18.2" fill="#e2f0d9" />
<text x="1053.1" y="692.9" font-size="12.2" fill="#262626" >$</text>
<text x="1114.9" y="692.9" font-size="12.2" fill="#262626" text-anchor="end" >1,467.90</text>
<rect x="1121.7" y="678.4" width="75.3" height="18.2" fill="#e2f0d9" />
<text x="1127.4" y="692.9" font-size="12.2" fill="#262626" >$</text>
<text x="1192.7" y="692.9" font-size="12.2" fill="#262626" text-anchor="end" >14,549.00</text>
<rect x="1199.5" y="678.4" width="78.7" height="18.2" fill="#e2f0d9" />
<text x="1205.2" y="692.9" font-size="12.2" fill="#262626" >$</text>
<text x="1273.9" y="692.9" font-size="12.2" fill="#262626" text-anchor="end" >1,359.80</text>
<rect x="1280.7" y="678.4" width="83.6" height="18.2" fill="#e2f0d9" />
<text x="1286.4" y="692.9" font-size="12.2" fill="#262626" >$</text>
<text x="1360.0" y="692.9" font-size="12.2" fill="#262626" text-anchor="end" >17,634.80</text>
<rect x="1366.8" y="678.4" width="87.2" height="18.2" fill="#e2f0d9" />
<text x="1372.5" y="692.9" font-size="12.2" fill="#262626" >$</text>
<text x="1449.7" y="692.9" font-size="12.2" fill="#262626" text-anchor="end" >3,188.20</text>
<rect x="1456.5" y="678.4" width="86.8" height="18.2" fill="#e2f0d9" />
<text x="1462.2" y="692.9" font-size="12.2" fill="#262626" >$</text>
<text x="1539.0" y="692.9" font-size="12.2" fill="#262626" text-anchor="end" >8,020.40</text>
<rect x="1545.8" y="678.4" width="51.2" height="18.2" fill="#c6e0b4" />
<text x="1550" y="692.9" font-size="12.2" fill="#262626" >$</text>
<text x="1622.5" y="692.9" font-size="12.2" fill="#262626" text-anchor="end" >154,372.00</text>
</g>
<g clip-path="url(#sheetclip)">
<rect x="352" y="245.5" width="434" height="215.5" fill="#fff" />
<rect x="352" y="245" width="434" height="1" fill="#e0e0e0" />
<text x="575.5" y="274.2" font-size="19.5" fill="#595959" font-weight="bold" text-anchor="middle" textLength="89" lengthAdjust="spacingAndGlyphs" >SUMMER</text>
<path d="M686.0 360.5 A118 57 0 0 1 568.0 417.5 L568.0 444.5 A118 57 0 0 0 686.0 387.5 Z" fill="#4e8a27" stroke="#4e8a27" stroke-width="0.6"/>
<path d="M568.0 417.5 A118 57 0 0 1 528.61 414.23 L528.61 441.23 A118 57 0 0 0 568.0 444.5 Z" fill="#006d8f" stroke="#006d8f" stroke-width="0.6"/>
<path d="M528.61 414.23 A118 57 0 0 1 450.0 360.5 L450.0 387.5 A118 57 0 0 0 528.61 441.23 Z" fill="#30591a" stroke="#30591a" stroke-width="0.6"/>
<path d="M568 355 L568.0 303.5 A118 57 0 0 1 568.0 417.5 Z" fill="#7cd03b" stroke="#7cd03b" stroke-width="0.7" stroke-linejoin="round"/>
<path d="M568 355 L568.0 417.5 A118 57 0 0 1 528.61 414.23 Z" fill="#00a9dc" stroke="#00a9dc" stroke-width="0.7" stroke-linejoin="round"/>
<path d="M568 355 L528.61 414.23 A118 57 0 0 1 568.0 303.5 Z" fill="#4b8025" stroke="#4b8025" stroke-width="0.7" stroke-linejoin="round"/>
<text x="434" y="297.7" font-size="12.5" fill="#4a8a27" font-weight="bold" text-anchor="middle" textLength="66" lengthAdjust="spacingAndGlyphs" >Total Gross</text>
<text x="434" y="315.2" font-size="12.5" fill="#4a8a27" font-weight="bold" text-anchor="middle" textLength="42" lengthAdjust="spacingAndGlyphs" >margin</text>
<text x="692.7" y="369.4" font-size="12.5" fill="#7cd03b" font-weight="bold" textLength="76" lengthAdjust="spacingAndGlyphs" >Total income</text>
<text x="519" y="427" font-size="12.5" fill="#12a8dc" font-weight="bold" text-anchor="middle" textLength="32" lengthAdjust="spacingAndGlyphs" >Total</text>
<text x="518.5" y="443.3" font-size="12.5" fill="#12a8dc" font-weight="bold" text-anchor="middle" textLength="54.5" lengthAdjust="spacingAndGlyphs" >expenses</text>
<rect x="787" y="247" width="355.5" height="213.5" fill="#fff" stroke="#d9d9d9" stroke-width="1.5"/>
<text x="870.8" y="280.8" font-size="22" fill="#787878" font-weight="bold" textLength="189.7" lengthAdjust="spacing" >MONTHLY SALE</text>
<defs><pattern id="stripe" width="4" height="2" patternUnits="userSpaceOnUse"><rect width="4" height="2" fill="#ace38f"/><rect width="4" height="0.7" fill="#92d16f"/></pattern></defs>
<rect x="941" y="305.7" width="6.8" height="6.6" fill="url(#stripe)" />
<text x="953.3" y="313.3" font-size="11" fill="#595959" textLength="39.7" lengthAdjust="spacingAndGlyphs" >Series 1</text>
<text x="849.9" y="347" font-size="11" fill="#595959" text-anchor="end" >$3,000.00</text>
<text x="849.9" y="371.2" font-size="11" fill="#595959" text-anchor="end" >$2,000.00</text>
<text x="849.9" y="395.5" font-size="11" fill="#595959" text-anchor="end" >$1,000.00</text>
<text x="849.9" y="419.2" font-size="11" fill="#595959" text-anchor="end" >$-</text>
<rect x="872.1" y="395.5" width="8.4" height="19.8" fill="url(#stripe)" />
<rect x="872.1" y="395.5" width="9.3" height="1.3" fill="#6fa653" />
<rect x="880.5" y="396.1" width="1" height="19.2" fill="#7db060" />
<text x="876.6" y="439" font-size="11" fill="#595959" text-anchor="middle" >1</text>
<rect x="893.6" y="401" width="8.4" height="14.3" fill="url(#stripe)" />
<rect x="893.6" y="401" width="9.3" height="1.3" fill="#6fa653" />
<rect x="902.0" y="401.6" width="1" height="13.7" fill="#7db060" />
<text x="898.0500000000001" y="439" font-size="11" fill="#595959" text-anchor="middle" >2</text>
<rect x="915.0" y="405.5" width="8.4" height="9.8" fill="url(#stripe)" />
<rect x="915.0" y="405.5" width="9.3" height="1.3" fill="#6fa653" />
<rect x="923.4" y="406.1" width="1" height="9.2" fill="#7db060" />
<text x="919.5" y="439" font-size="11" fill="#595959" text-anchor="middle" >3</text>
<rect x="936.5" y="356.3" width="8.4" height="59.0" fill="url(#stripe)" />
<rect x="936.5" y="356.3" width="9.3" height="1.3" fill="#6fa653" />
<rect x="944.9" y="356.90000000000003" width="1" height="58.4" fill="#7db060" />
<text x="940.95" y="439" font-size="11" fill="#595959" text-anchor="middle" >4</text>
<rect x="957.9" y="399.5" width="8.4" height="15.8" fill="url(#stripe)" />
<rect x="957.9" y="399.5" width="9.3" height="1.3" fill="#6fa653" />
<rect x="966.3" y="400.1" width="1" height="15.2" fill="#7db060" />
<text x="962.4" y="439" font-size="11" fill="#595959" text-anchor="middle" >5</text>
<rect x="979.4" y="406.5" width="8.4" height="8.8" fill="url(#stripe)" />
<rect x="979.4" y="406.5" width="9.3" height="1.3" fill="#6fa653" />
<rect x="987.8" y="407.1" width="1" height="8.2" fill="#7db060" />
<text x="983.85" y="439" font-size="11" fill="#595959" text-anchor="middle" >6</text>
<rect x="1000.8" y="411" width="8.4" height="4.3" fill="url(#stripe)" />
<rect x="1000.8" y="411" width="9.3" height="1.3" fill="#6fa653" />
<rect x="1009.2" y="411.6" width="1" height="3.7" fill="#7db060" />
<text x="1005.3" y="439" font-size="11" fill="#595959" text-anchor="middle" >7</text>
<rect x="1022.2" y="387.3" width="8.4" height="28.0" fill="url(#stripe)" />
<rect x="1022.2" y="387.3" width="9.3" height="1.3" fill="#6fa653" />
<rect x="1030.7" y="387.90000000000003" width="1" height="27.4" fill="#7db060" />
<text x="1026.75" y="439" font-size="11" fill="#595959" text-anchor="middle" >8</text>
<rect x="1043.7" y="390.4" width="8.4" height="24.9" fill="url(#stripe)" />
<rect x="1043.7" y="390.4" width="9.3" height="1.3" fill="#6fa653" />
<rect x="1052.1" y="391.0" width="1" height="24.3" fill="#7db060" />
<text x="1048.2" y="439" font-size="11" fill="#595959" text-anchor="middle" >9</text>
<rect x="1065.2" y="395.8" width="8.4" height="19.5" fill="url(#stripe)" />
<rect x="1065.2" y="395.8" width="9.3" height="1.3" fill="#6fa653" />
<rect x="1073.6" y="396.40000000000003" width="1" height="18.9" fill="#7db060" />
<text x="1069.65" y="439" font-size="11" fill="#595959" text-anchor="middle" >10</text>
<rect x="1086.6" y="403.4" width="8.4" height="11.9" fill="url(#stripe)" />
<rect x="1086.6" y="403.4" width="9.3" height="1.3" fill="#6fa653" />
<rect x="1095.0" y="404.0" width="1" height="11.3" fill="#7db060" />
<text x="1091.1" y="439" font-size="11" fill="#595959" text-anchor="middle" >11</text>
<rect x="1108.0" y="393.4" width="8.4" height="21.9" fill="url(#stripe)" />
<rect x="1108.0" y="393.4" width="9.3" height="1.3" fill="#6fa653" />
<rect x="1116.5" y="394.0" width="1" height="21.3" fill="#7db060" />
<text x="1112.55" y="439" font-size="11" fill="#595959" text-anchor="middle" >12</text>
<rect x="1152.5" y="245.5" width="460" height="193.5" fill="#fff" stroke="#d9d9d9" stroke-width="1.5"/>
<text x="1234.2" y="274" font-size="18.5" fill="#767676" font-weight="bold" textLength="308" lengthAdjust="spacingAndGlyphs" >Dynamics of Sales and Gross margin</text>
<defs><linearGradient id="pg" x1="0" y1="0" x2="0" y2="1"><stop offset="0" stop-color="#ffffff"/><stop offset="1" stop-color="#e9e9e9"/></linearGradient></defs>
<rect x="1229.7" y="296" width="400" height="110.6" fill="url(#pg)" />
<rect x="1229.7" y="386" width="367.29999999999995" height="1" fill="#d0d0d0" />
<text x="1217.5" y="302.1" font-size="12" fill="#595959" text-anchor="end" >$20,000.00</text>
<text x="1217.5" y="324" font-size="12" fill="#595959" text-anchor="end" >$15,000.00</text>
<text x="1217.5" y="346.2" font-size="12" fill="#595959" text-anchor="end" >$10,000.00</text>
<text x="1217.5" y="368.7" font-size="12" fill="#595959" text-anchor="end" >$5,000.00</text>
<text x="1217.5" y="391.5" font-size="12" fill="#595959" text-anchor="end" >$-</text>
<text x="1217.5" y="413.7" font-size="12" fill="#595959" text-anchor="end" >$(5,000.00)</text>
<text x="1245.8" y="410.8" font-size="12" fill="#595959" text-anchor="middle" >1</text>
<text x="1275.84" y="410.8" font-size="12" fill="#595959" text-anchor="middle" >2</text>
<text x="1305.8799999999999" y="410.8" font-size="12" fill="#595959" text-anchor="middle" >3</text>
<text x="1335.92" y="410.8" font-size="12" fill="#595959" text-anchor="middle" >4</text>
<text x="1365.96" y="410.8" font-size="12" fill="#595959" text-anchor="middle" >5</text>
<text x="1396.0" y="410.8" font-size="12" fill="#595959" text-anchor="middle" >6</text>
<text x="1426.04" y="410.8" font-size="12" fill="#595959" text-anchor="middle" >7</text>
<text x="1456.08" y="410.8" font-size="12" fill="#595959" text-anchor="middle" >8</text>
<text x="1486.12" y="410.8" font-size="12" fill="#595959" text-anchor="middle" >9</text>
<text x="1516.1599999999999" y="410.8" font-size="12" fill="#595959" text-anchor="middle" >10</text>
<text x="1546.1999999999998" y="410.8" font-size="12" fill="#595959" text-anchor="middle" >11</text>
<text x="1576.24" y="410.8" font-size="12" fill="#595959" text-anchor="middle" >12</text>
<polyline points="1245.8,386 1275.8,361 1305.9,351.5 1335.9,366 1366.0,379.8 1396.0,370 1426.0,379.8 1456.1,374.6 1486.1,373.7 1516.2,375.3 1546.2,344.3 1576.2,361.6 1606.3,369.4" fill="none" stroke="#6fce3a" stroke-width="2.6" stroke-linejoin="round"/>
<polyline points="1245.8,386 1275.8,297 1305.9,297 1335.9,351 1366.0,386 1396.0,313 1426.0,336.7 1456.1,366.1 1486.1,326.6 1516.2,369.2 1546.2,297.1 1576.2,341.2 1606.3,317.8" fill="none" stroke="#e6137b" stroke-width="2.6" stroke-linejoin="round"/>
<rect x="1307.8" y="420.6" width="30.4" height="2.6" fill="#6fce3a" />
<text x="1340" y="425.4" font-size="12" fill="#595959" textLength="23" lengthAdjust="spacingAndGlyphs" >Sale</text>
<rect x="1363.5" y="420.6" width="32.5" height="2.6" fill="#e6137b" />
<text x="1398.4" y="425.4" font-size="12" fill="#595959" textLength="69" lengthAdjust="spacingAndGlyphs" >Gross margin</text>
</g>
<rect x="1597" y="158" width="14" height="556" fill="#e3e3e3" />
<rect x="1597.5" y="160" width="11.5" height="12" fill="#f5f5f5" stroke="#dedede" stroke-width="1"/>
<path d="M1599.8 169 L1603.2 165.3 L1606.6 169 Z" fill="#a5a5a5"/>
<rect x="1597.5" y="190.5" width="11.5" height="204" fill="#f7f7f7" stroke="#d6d6d6" stroke-width="1"/>
<rect x="1600" y="287" width="6" height="1" fill="#c8c8c8" />
<rect x="1600" y="289" width="6" height="1" fill="#c8c8c8" />
<rect x="1600" y="291" width="6" height="1" fill="#c8c8c8" />
<rect x="1600" y="293" width="6" height="1" fill="#c8c8c8" />
<rect x="1600" y="295" width="6" height="1" fill="#c8c8c8" />
<rect x="1597.5" y="700" width="11.5" height="12.5" fill="#f5f5f5" stroke="#dedede" stroke-width="1"/>
<path d="M1599.8 704.5 L1603.2 708.2 L1606.6 704.5 Z" fill="#a5a5a5"/>
<rect x="323" y="714" width="1274" height="15" fill="#e3e3e3" />
<rect x="324.5" y="715" width="13" height="12.5" fill="#f5f5f5" stroke="#dedede" stroke-width="1"/>
<path d="M333.5 718 L329.8 721.3 L333.5 724.6 Z" fill="#a5a5a5"/>
<rect x="337.5" y="715" width="1163" height="12.5" fill="#f7f7f7" stroke="#d6d6d6" stroke-width="1"/>
<rect x="914" y="718.5" width="1" height="6.0" fill="#c8c8c8" />
<rect x="916" y="718.5" width="1" height="6.0" fill="#c8c8c8" />
<rect x="918" y="718.5" width="1" height="6.0" fill="#c8c8c8" />
<rect x="920" y="718.5" width="1" height="6.0" fill="#c8c8c8" />
<rect x="922" y="718.5" width="1" height="6.0" fill="#c8c8c8" />
<rect x="1582.7" y="715" width="13" height="12.5" fill="#f5f5f5" stroke="#dedede" stroke-width="1"/>
<path d="M1587.8 718 L1591.5 721.3 L1587.8 724.6 Z" fill="#a5a5a5"/>
<g fill="none" stroke="#a3a3a3" stroke-width="1.1">
<rect x="1626.5" y="157.5" width="14" height="12" rx="1"/>
<rect x="1629.5" y="160.5" width="8" height="6" fill="#d5d5d5"/>
<path d="M1626.5 160.5 H1640.5 M1626.5 166.5 H1640.5 M1629.5 157.5 V169.5 M1637.5 157.5 V169.5"/>
<rect x="1626.5" y="199.5" width="14" height="11"/>
<path d="M1626.5 203.5 H1640.5 M1626.5 207 H1640.5 M1631 199.5 V210.5 M1636 199.5 V210.5"/>
<path d="M1633 243.5 H1627.5 V237.5 H1634.5 V241"/>
<circle cx="1636" cy="247.5" r="5"/>
<rect x="1626.5" y="279.5" width="14" height="14"/>
<path d="M1626.5 291 L1631.5 285.5 L1635 289 L1637 287 L1640.5 290.5"/>
<circle cx="1630.5" cy="283" r="1.3"/>
<path d="M1627.5 329.5 H1630.5 V334.5 H1627.5 Z M1632 325.5 H1635 V334.5 H1632 Z M1636.5 320.5 H1639.5 V334.5 H1636.5 Z"/>
<path d="M1634.5 362 V375 M1637.5 362 V375 M1631.5 362 H1639"/>
<path d="M1626 401.5 H1633 M1629.5 401.5 V411"/>
<path d="M1627 418 Q1633 411 1639 418"/>
<path d="M1627.5 443.5 H1630.5 V447.5 H1627.5 Z M1632.5 443.5 H1639.5 V447.5 H1632.5 Z M1627.5 450.5 H1630.5 V457.5 H1627.5 Z"/>
<path d="M1638.5 450 Q1638 456 1633 456.5 M1634.5 455 L1632.8 456.5 L1634.5 458"/>
<path d="M1627.5 483.5 H1639.5 V493 M1627.5 483.5 V497.5 H1633"/>
<path d="M1630 487 H1637 M1630 490 H1637 M1630 493 H1634"/>
</g>
<path d="M1633.5 361.5 A3 3.3 0 0 0 1633.5 368.1 Z" fill="#a3a3a3"/>
<text x="1634.3" y="411.5" font-size="10" fill="#a3a3a3" >a</text>
<path d="M1634 494.5 H1641 L1638.3 497.5 V500.5 L1636.7 499.5 V497.5 Z" fill="#a3a3a3"/>
<rect x="0" y="729" width="1650" height="28" fill="#f1f1f1" />
<rect x="0" y="729" width="1650" height="1" fill="#d6d6d6" />
<rect x="73" y="730" width="1" height="27" fill="#d6d6d6" />
<rect x="138.5" y="730" width="1" height="27" fill="#d6d6d6" />
<path d="M25 738.5 L20 743.8 L25 749 M46 738.5 L51 743.8 L46 749" fill="none" stroke="#999" stroke-width="1.2"/>
<path d="M93 737.5 V749.5 M87 743.5 H99" fill="none" stroke="#666" stroke-width="1.2"/>
<path d="M112.5 738.5 H123.5 M112.5 742 H123.5 M112.5 745.5 H123.5 M112.5 749 H123.5" fill="none" stroke="#555" stroke-width="1.2"/>
<rect x="200" y="730" width="1" height="27" fill="#d6d6d6" />
<text x="169.55" y="746.8" font-size="12" fill="#a5a5a5" text-anchor="middle" >Sheet6</text>
<rect x="200.4" y="730" width="54.79999999999998" height="27" fill="#fff" />
<rect x="200.4" y="730" width="54.79999999999998" height="4" fill="#79cf3a" />
<rect x="255" y="730" width="1" height="27" fill="#d6d6d6" />
<text x="227.8" y="746.8" font-size="12" fill="#333" font-weight="bold" text-anchor="middle" >PLAN</text>
<rect x="255.2" y="730" width="61.10000000000002" height="4" fill="#ffb40d" />
<rect x="255.2" y="734" width="61.10000000000002" height="1" fill="#fff" />
<rect x="316" y="730" width="1" height="27" fill="#d6d6d6" />
<text x="285.75" y="746.8" font-size="12" fill="#a5a5a5" text-anchor="middle" >Sheet4</text>
<rect x="316.3" y="730" width="62.0" height="4" fill="#e8177b" />
<rect x="316.3" y="734" width="62.0" height="1" fill="#fff" />
<rect x="378" y="730" width="1" height="27" fill="#d6d6d6" />
<text x="347.3" y="746.8" font-size="12" fill="#a5a5a5" text-anchor="middle" >Sheet5</text>
<rect x="440" y="730" width="1" height="27" fill="#d6d6d6" />
<text x="409.35" y="746.8" font-size="12" fill="#a5a5a5" text-anchor="middle" >Sheet1</text>
<rect x="502" y="730" width="1" height="27" fill="#d6d6d6" />
<text x="471.2" y="746.8" font-size="12" fill="#a5a5a5" text-anchor="middle" >Sheet3</text>
<rect x="564" y="730" width="1" height="27" fill="#d6d6d6" />
<text x="532.85" y="746.8" font-size="12" fill="#a5a5a5" text-anchor="middle" >Sheet2</text>
<rect x="1480" y="743" width="12" height="1.2" fill="#555" />
<text x="1509.4" y="747.3" font-size="12" fill="#333" font-weight="bold" textLength="67" lengthAdjust="spacingAndGlyphs" >Zoom 100%</text>
<path d="M1600.5 737.5 V749.5 M1594.5 743.5 H1606.5" fill="none" stroke="#444" stroke-width="1.2"/>
</svg>
</body></html>
